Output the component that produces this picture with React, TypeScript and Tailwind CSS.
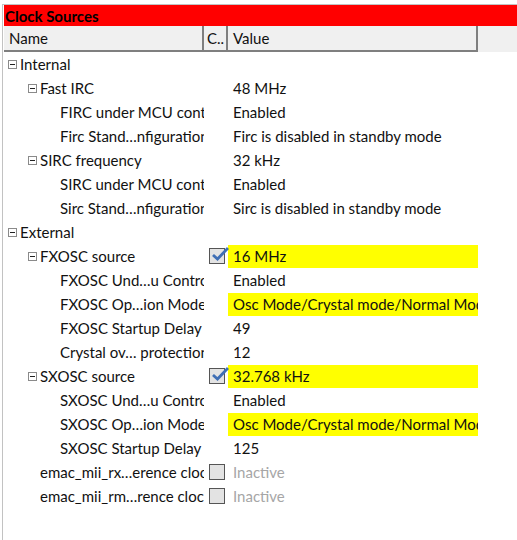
import React from 'react';

type Row = {
  name: string;
  level: number;
  group?: boolean;
  value?: string;
  check?: 'on' | 'off';
  highlight?: boolean;
  muted?: boolean;
};

const rows: Row[] = [
  { name: 'Internal', level: 0, group: true },
  { name: 'Fast IRC', level: 1, group: true, value: '48 MHz' },
  { name: 'FIRC under MCU control', level: 2, value: 'Enabled' },
  { name: 'Firc Stand…nfiguration', level: 2, value: 'Firc is disabled in standby mode' },
  { name: 'SIRC frequency', level: 1, group: true, value: '32 kHz' },
  { name: 'SIRC under MCU control', level: 2, value: 'Enabled' },
  { name: 'Sirc Stand…nfiguration', level: 2, value: 'Sirc is disabled in standby mode' },
  { name: 'External', level: 0, group: true },
  { name: 'FXOSC source', level: 1, group: true, check: 'on', value: '16 MHz', highlight: true },
  { name: 'FXOSC Und…u Control', level: 2, value: 'Enabled' },
  { name: 'FXOSC Op…ion Mode', level: 2, value: 'Osc Mode/Crystal mode/Normal Mode', highlight: true },
  { name: 'FXOSC Startup Delay', level: 2, value: '49' },
  { name: 'Crystal ov… protection', level: 2, value: '12' },
  { name: 'SXOSC source', level: 1, group: true, check: 'on', value: '32.768 kHz', highlight: true },
  { name: 'SXOSC Und…u Control', level: 2, value: 'Enabled' },
  { name: 'SXOSC Op…ion Mode', level: 2, value: 'Osc Mode/Crystal mode/Normal Mode', highlight: true },
  { name: 'SXOSC Startup Delay', level: 2, value: '125' },
  { name: 'emac_mii_rx…erence clock', level: 1, check: 'off', value: 'Inactive', muted: true },
  { name: 'emac_mii_rm…rence clock', level: 1, check: 'off', value: 'Inactive', muted: true },
];

function Expander() {
  return (
    <span className="flex h-[9px] w-[9px] items-center justify-center border border-[#8a8a8a] bg-white">
      <span className="h-px w-[5px] bg-[#222]" />
    </span>
  );
}

function CheckBox({ checked }: { checked: boolean }) {
  return (
    <span className="relative block h-[16px] w-[16px] border border-[#555] bg-[#e3e3e3]">
      {checked && (
        <svg className="absolute left-[1px] top-[-4px]" width="18" height="18" viewBox="0 0 18 18">
          <path d="M2 10 L6.5 14 L17 3" fill="none" stroke="#3f6fb5" strokeWidth="2.8" />
        </svg>
      )}
    </span>
  );
}

const indent = ['pl-[4px]', 'pl-[24px]', 'pl-[44px]'];

function TreeRow({ row }: { row: Row }) {
  return (
    <div className="flex h-[24px] items-center">
      <div className={`flex w-[200px] items-center overflow-hidden whitespace-nowrap ${indent[row.level]}`}>
        <span className="flex w-[12px] shrink-0 items-center">{row.group && <Expander />}</span>
        <span>{row.name}</span>
      </div>
      <div className="flex w-[24px] items-center justify-center pl-[1px]">
        {row.check && <CheckBox checked={row.check === 'on'} />}
      </div>
      <div
        className={`mt-px flex h-[23px] w-[250px] items-center overflow-hidden whitespace-nowrap pl-[5px] ${
          row.highlight ? 'bg-[#ffff00]' : ''
        } ${row.muted ? 'text-[#a6a6a6]' : ''}`}
      >
        {row.value}
      </div>
    </div>
  );
}

export default function App() {
  return (
    <div className="h-[540px] w-[517px] overflow-hidden bg-white pl-[2px] pt-[4px] text-[15px] text-[#111] [font-family:Lato,'Liberation_Sans',sans-serif]">
      <div className="h-full border-l border-t border-[#c2c2c2] pl-px">
        <div className="flex h-[21px] items-center bg-[#ff0000] pl-px pt-px text-[15px] font-bold text-black">
          Clock Sources
        </div>
        <div className="flex h-[26px] bg-[#f0f0f0]">
          <div className="flex w-[200px] items-center border-b-2 border-r-2 border-[#7f7f7f] pl-[5px]">Name</div>
          <div className="flex w-[24px] items-center overflow-hidden border-b-2 border-r-2 border-[#7f7f7f] pl-[3px]">C..</div>
          <div className="flex w-[250px] items-center border-b-2 border-r-2 border-[#7f7f7f] pl-[5px]">Value</div>
        </div>
        <div>
          {rows.map((r, i) => (
            <TreeRow key={i} row={r} />
          ))}
        </div>
      </div>
    </div>
  );
}
